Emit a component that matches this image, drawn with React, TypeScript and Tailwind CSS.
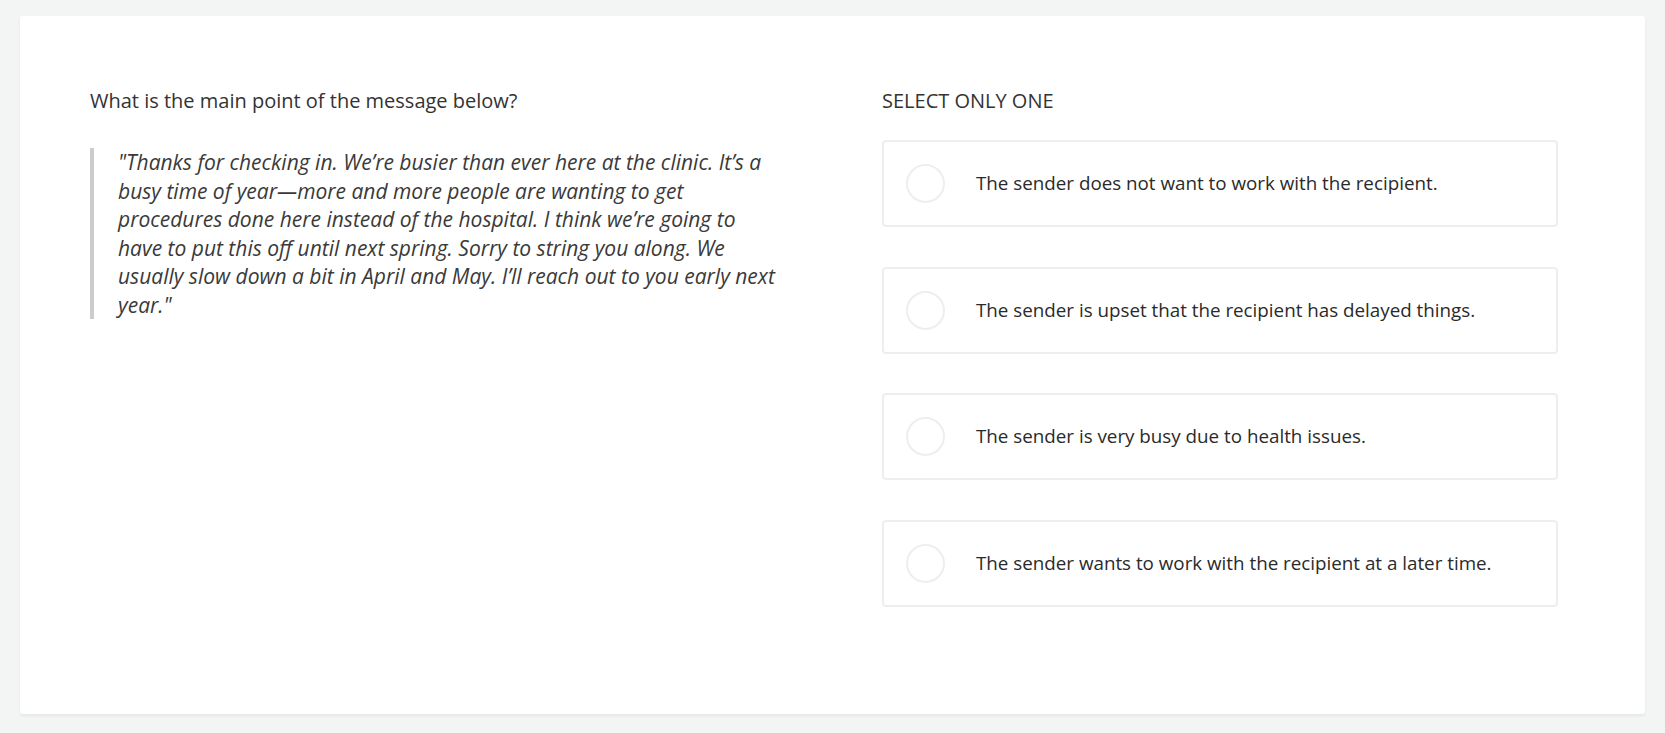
import React from 'react';

const options = [
  'The sender does not want to work with the recipient.',
  'The sender is upset that the recipient has delayed things.',
  'The sender is very busy due to health issues.',
  'The sender wants to work with the recipient at a later time.',
];

const quoteLines = [
  '"Thanks for checking in. We’re busier than ever here at the clinic. It’s a',
  'busy time of year—more and more people are wanting to get',
  'procedures done here instead of the hospital. I think we’re going to',
  'have to put this off until next spring. Sorry to string you along. We',
  'usually slow down a bit in April and May. I’ll reach out to you early next',
  'year."',
];

export default function App() {
  return (
    <div className="min-h-screen bg-[#f3f4f4] px-[20px] pt-[16px] pb-[19px] font-['Open_Sans',sans-serif] text-[#333]">
      <div className="h-[698px] rounded-[3px] bg-white pl-[70px] pr-[87px] pt-[71px] shadow-[0_2px_3px_rgba(0,0,0,0.06)]">
        <div className="grid grid-cols-2 gap-x-[116px]">
          {/* Question + message */}
          <div>
            <p className="text-[20px] leading-[27px] text-[#333]">What is the main point of the message below?</p>
            <blockquote className="mt-[34px] w-[720px] border-l-4 border-[#cccccc] pl-[24px] text-[21px] italic leading-[28.5px] text-[#3a3a3a]">
              {quoteLines.map((l, i) => (
                <span key={i} className="block whitespace-nowrap">
                  {l}
                </span>
              ))}
            </blockquote>
          </div>

          {/* Answers */}
          <div>
            <p className="text-[20px] uppercase leading-[27px] text-[#333]">Select only one</p>
            <div className="mt-[26px] flex flex-col gap-[39.5px]">
              {options.map((o) => (
                <label
                  key={o}
                  className="flex h-[87px] cursor-pointer items-center rounded-[4px] border-2 border-[#eeeeee] bg-white pl-[22px]"
                >
                  <span className="h-[39px] w-[39px] shrink-0 rounded-full border-2 border-[#eeeeee] bg-white" />
                  <span className="ml-[31px] text-[18.8px] text-[#2a2a2a]">{o}</span>
                </label>
              ))}
            </div>
          </div>
        </div>
      </div>
    </div>
  );
}
